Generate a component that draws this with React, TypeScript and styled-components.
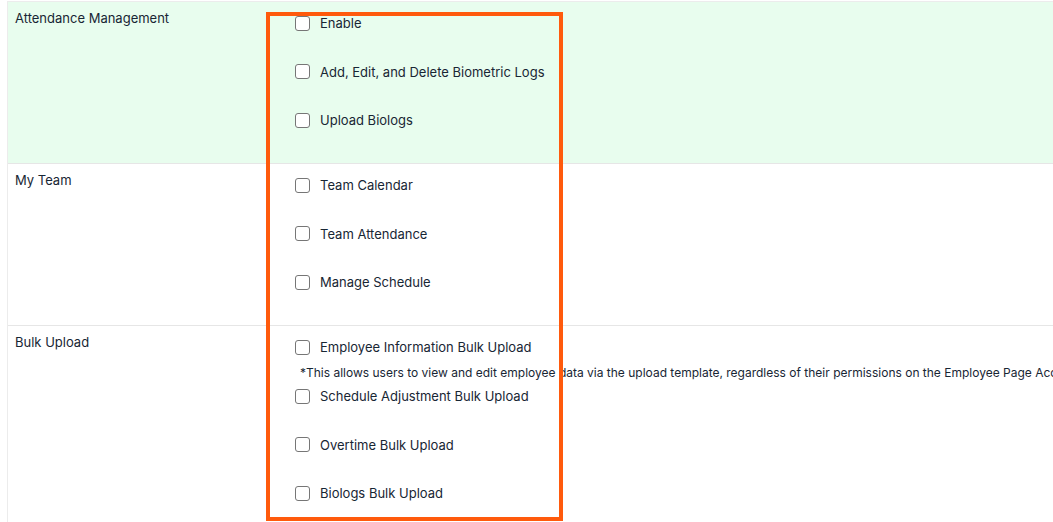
import React from "react";
import styled, { createGlobalStyle } from "styled-components";

type Group = {
  title: string
  shaded?: boolean
  items: { label: string; note?: string }[]
}

const groups: Group[] = [
  {
    title: "Attendance Management",
    shaded: true,
    items: [
      { label: "Enable" },
      { label: "Add, Edit, and Delete Biometric Logs" },
      { label: "Upload Biologs" },
    ],
  },
  {
    title: "My Team",
    items: [
      { label: "Team Calendar" },
      { label: "Team Attendance" },
      { label: "Manage Schedule" },
    ],
  },
  {
    title: "Bulk Upload",
    items: [
      {
        label: "Employee Information Bulk Upload",
        note: "*This allows users to view and edit employee data via the upload template, regardless of their permissions on the Employee Page Access.",
      },
      { label: "Schedule Adjustment Bulk Upload" },
      { label: "Overtime Bulk Upload" },
      { label: "Biologs Bulk Upload" },
    ],
  },
]

const GlobalStyle = createGlobalStyle`
  html, body {
    margin: 0;
    padding: 0;
    overflow: hidden;
    background: #ffffff;
  }
  body {
    font-family: Inter, "Liberation Sans", sans-serif;
    color: #182634;
  }
`

const Page = styled.div`
  position: relative;
  width: 1053px;
  height: 522px;
  overflow: hidden;
  padding: 1px 0 0 7px;
  box-sizing: border-box;
`

const Table = styled.div`
  border-top: 1px solid #ececec;
  border-left: 1px solid #ececec;
  width: 1300px;
`

const Row = styled.div<{ $shaded?: boolean }>`
  display: grid;
  grid-template-columns: 272px 1fr;
  background: ${(p) => (p.$shaded ? "#e8fdee" : "#ffffff")};
  border-bottom: 1px solid #e6e6e6;
`

const Label = styled.div`
  padding: 7px 0 0 7px;
  font-size: 13px;
  line-height: 18px;
`

const Options = styled.div`
  padding: 7px 0 8.7px 15px;
`

const Option = styled.label<{ $hasNote?: boolean }>`
  display: flex;
  align-items: center;
  gap: 10px;
  height: 28px;
  margin-bottom: ${(p) => (p.$hasNote ? "0" : "20.5px")};
  font-size: 13px;
`

const Box = styled.span`
  width: 13px;
  height: 13px;
  border: 1px solid #767676;
  border-radius: 3px;
  background: #ffffff;
  flex-shrink: 0;
`

const Note = styled.div`
  margin: 4px 0 1px 5px;
  font-size: 12px;
  line-height: 16px;
  white-space: nowrap;
`

const Highlight = styled.div`
  position: absolute;
  left: 266px;
  top: 12px;
  width: 297px;
  height: 509px;
  border: 4.5px solid #ff5a0c;
  box-sizing: border-box;
  pointer-events: none;
`

export default function App() {
  return (
    <Page>
      <GlobalStyle />
      <Table>
        {groups.map((g) => (
          <Row key={g.title} $shaded={g.shaded}>
            <Label>{g.title}</Label>
            <Options>
              {g.items.map((item) => (
                <React.Fragment key={item.label}>
                  <Option $hasNote={!!item.note}>
                    <Box />
                    {item.label}
                  </Option>
                  {item.note && <Note>{item.note}</Note>}
                </React.Fragment>
              ))}
            </Options>
          </Row>
        ))}
      </Table>
      <Highlight />
    </Page>
  )
}
